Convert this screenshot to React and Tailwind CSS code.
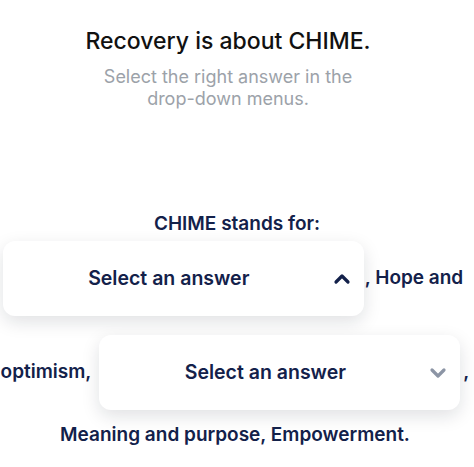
import React from 'react'

function Chevron({ up = false, className = '' }) {
  return (
    <svg viewBox="0 0 18 12" className={className} fill="none" stroke="currentColor" strokeWidth="3.2" strokeLinecap="round" strokeLinejoin="round">
      {up ? <path d="M3 9l6-6 6 6" /> : <path d="M3 3l6 6 6-6" />}
    </svg>
  )
}

function AnswerSelect({ open = false }) {
  return (
    <div className="flex items-center w-[361px] h-[75px] shrink-0 bg-white rounded-[12px] shadow-[0_6px_18px_rgba(15,23,42,0.13)] pl-4 pr-[13px]">
      <span className="flex-1 text-center text-[19.5px] font-semibold text-[#13214a]">Select an answer</span>
      <Chevron up={open} className={`w-[18px] h-[12px] ml-[14px] ${open ? 'text-[#13214a]' : 'text-[#8c95a5]'}`} />
    </div>
  )
}

export default function App() {
  return (
    <div className="w-[474px] h-[467px] bg-white overflow-hidden font-['Inter',sans-serif]">
      <div className="pt-[26px] pr-[18px] text-center">
        <h1 className="text-[23px] font-medium text-[#111] leading-[30px]">Recovery is about CHIME.</h1>
        <p className="mt-[10px] mx-auto w-[290px] text-[18px] text-[#9ca2a9] leading-[22px]">
          Select the right answer in the drop-down menus.
        </p>
      </div>

      <p className="mt-[101px] text-center text-[19px] font-semibold text-[#13214a] leading-[26px]">CHIME stands for:</p>

      <div className="mt-[4px] flex items-center justify-center pr-[8px] text-[19px] font-semibold text-[#13214a]">
        <AnswerSelect open />
        <span className="ml-[1px] whitespace-nowrap">, Hope and</span>
      </div>

      <div className="mt-[19px] flex items-center justify-center pr-[4px] text-[19px] font-semibold text-[#13214a]">
        <span className="mr-[8px] whitespace-nowrap">optimism,</span>
        <AnswerSelect />
        <span className="ml-[3px]">,</span>
      </div>

      <p className="mt-[12px] pr-[4px] text-center text-[19px] font-semibold text-[#13214a] leading-[26px]">
        Meaning and purpose, Empowerment.
      </p>
    </div>
  )
}
